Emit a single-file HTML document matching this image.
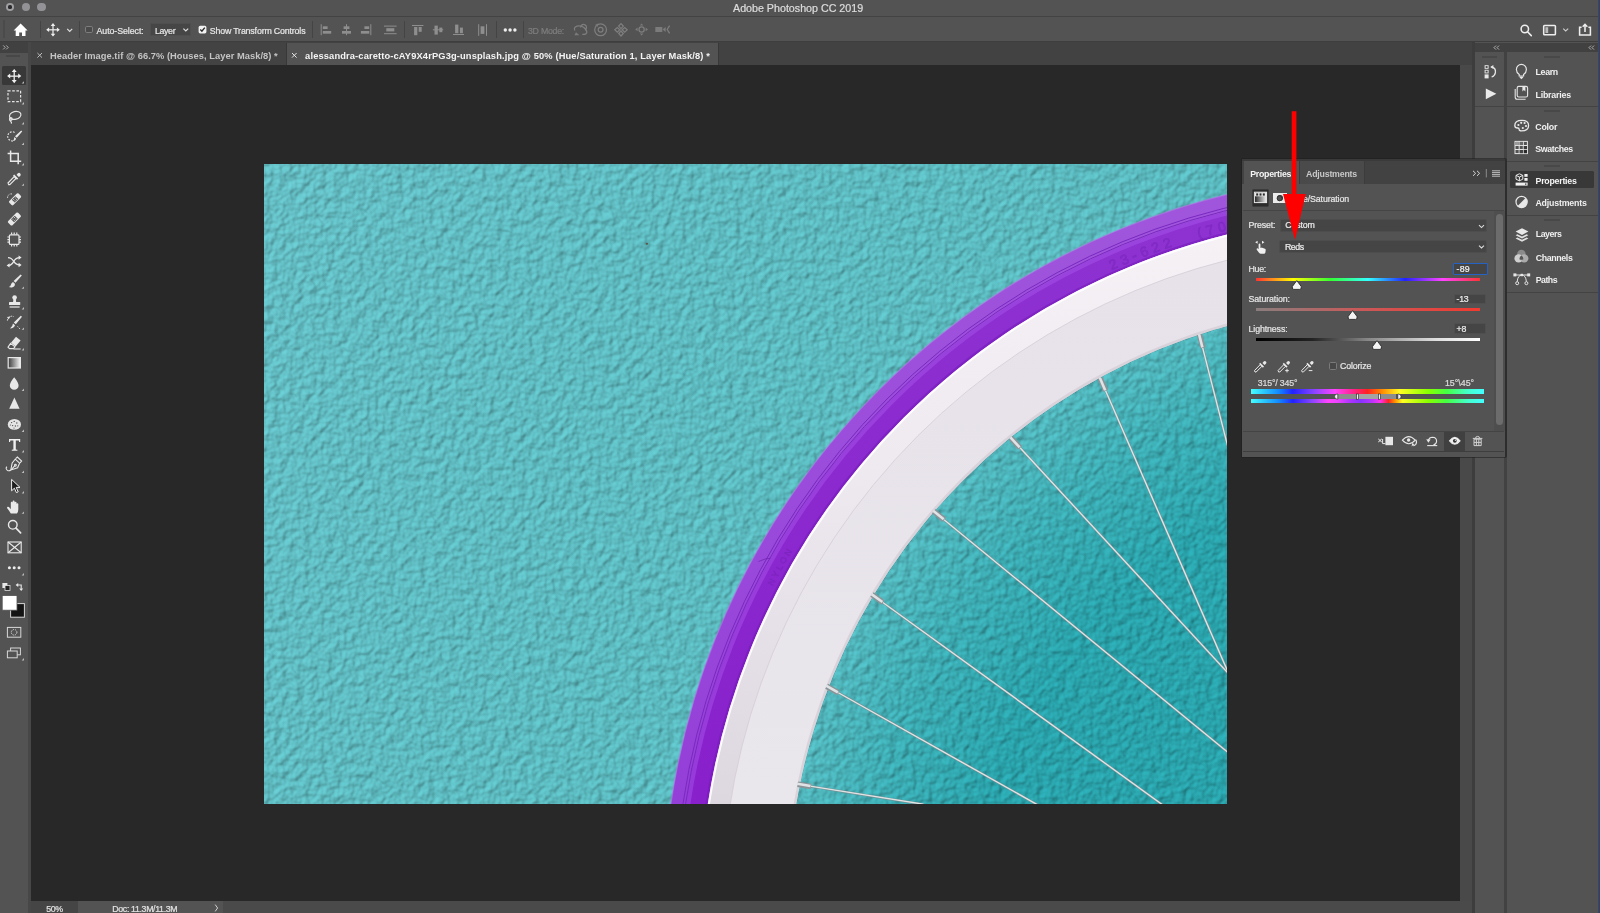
<!DOCTYPE html>
<html lang="en">
<head>
<meta charset="utf-8">
<title>Adobe Photoshop CC 2019</title>
<style>
*{margin:0;padding:0;box-sizing:border-box}
html,body{width:1600px;height:913px;overflow:hidden;background:#282828}
body{font-family:"Liberation Sans",sans-serif;font-size:9px;color:#e0e0e0;-webkit-font-smoothing:antialiased}
#root{position:relative;width:1600px;height:913px;overflow:hidden;will-change:transform}
.a{position:absolute}
.t{position:absolute;white-space:nowrap;line-height:1;-webkit-text-stroke:0.22px currentColor}
.b{font-weight:bold;-webkit-text-stroke:0}
svg{position:absolute;overflow:visible}
.sep{position:absolute;width:1px;background:#444;top:21px;height:17px}
.sep2{position:absolute;width:1px;background:#5e5e5e;top:21px;height:17px}
</style>
</head>
<body>
<div id="root">

<!-- ===== title bar ===== -->
<div class="a" style="left:0;top:0;width:1600px;height:16px;background:#535353"></div>
<div class="a" style="left:0;top:15.5px;width:1600px;height:1.5px;background:#434343"></div>
<div class="a" style="left:5.8px;top:2.8px;width:8.4px;height:8.4px;border-radius:50%;background:#a0a0a4"></div>
<div class="a" style="left:8.4px;top:5.4px;width:3.2px;height:3.2px;border-radius:50%;background:#2a2a2c"></div>
<div class="a" style="left:21.8px;top:2.8px;width:8.4px;height:8.4px;border-radius:50%;background:#939397"></div>
<div class="a" style="left:37.4px;top:2.8px;width:8.4px;height:8.4px;border-radius:50%;background:#939397"></div>
<div class="t" style="left:733px;top:2.9px;font-size:10.7px;color:#dcdcdc;letter-spacing:0">Adobe Photoshop CC 2019</div>

<!-- ===== options bar ===== -->
<div class="a" style="left:0;top:17px;width:1600px;height:24px;background:#535353"></div>
<div class="a" style="left:0;top:40.8px;width:1600px;height:1.4px;background:#3e3e3e"></div>
<div class="a" style="left:3px;top:20px;width:2px;height:18px;background:#4b4b4b"></div>
<!-- home -->

<div class="sep" style="left:40px"></div>
<div class="sep" style="left:79px"></div>
<div class="a" style="left:85.2px;top:25.8px;width:7.6px;height:7.6px;border:1px solid #7e7e7e;border-radius:1.8px;background:#4a4a4a"></div>
<div class="t" style="left:96.5px;top:26.5px;font-size:8.8px;letter-spacing:-0.06px;color:#e6e6e6">Auto-Select:</div>
<div class="a" style="left:150.2px;top:22.8px;width:41.2px;height:12.8px;background:#464646;border:1px solid #4f4f4f;border-radius:1.5px"></div>
<div class="t" style="left:155px;top:26.5px;font-size:8.8px;letter-spacing:-0.36px;color:#e6e6e6">Layer</div>
<div class="t" style="left:209.7px;top:26.5px;font-size:8.8px;letter-spacing:-0.154px;color:#e6e6e6">Show Transform Controls</div>
<div class="sep" style="left:311.5px"></div>
<div class="sep" style="left:403.6px"></div>
<div class="sep" style="left:496px"></div>
<div class="sep" style="left:523.2px"></div>
<div class="t" style="left:528px;top:26.5px;font-size:8.8px;letter-spacing:-0.27px;color:#7d7d7d">3D Mode:</div>
<svg class="a" style="left:0;top:0" width="1600" height="44" viewBox="0 0 1600 44">
 <path d="M20.6 23.6 L27.6 30.5 L25.5 30.5 L25.5 36 L22 36 L22 32.4 L19.2 32.4 L19.2 36 L15.7 36 L15.7 30.5 L13.6 30.5 Z" fill="#fff"/>
 <!-- move tool -->
 <g fill="#eee" stroke="none">
  <rect x="47.6" y="29.2" width="10.8" height="1.2"/><rect x="52.4" y="24.4" width="1.2" height="10.8"/>
  <path d="M53 23 L55.3 25.9 H50.7Z M53 36.6 L55.3 33.7 H50.7Z M46.2 29.8 L49.1 27.5 V32.1Z M59.8 29.8 L56.9 27.5 V32.1Z"/>
 </g>
 <polyline points="67.2,28.9 69.7,31.4 72.2,28.9" fill="none" stroke="#ddd" stroke-width="1.2"/>
 <!-- layer dropdown chevron -->
 <polyline points="183.4,28.6 185.8,31 188.2,28.6" fill="none" stroke="#ddd" stroke-width="1.2"/>
 <!-- check mark -->
 <rect x="198.6" y="25.8" width="7.8" height="7.6" rx="1.6" fill="#f2f2f2"/>
 <polyline points="200.3,29.6 201.9,31.3 204.8,27.6" fill="none" stroke="#2b2b2b" stroke-width="1.4"/>
 <!-- align icons (disabled) -->
 <g fill="#8e8e8e">
  <rect x="320.7" y="24.2" width="1" height="11"/><rect x="322.8" y="26.3" width="4.8" height="2.7"/><rect x="322.8" y="31" width="8.4" height="2.7"/>
  <rect x="346" y="24.2" width="1" height="11"/><rect x="343.6" y="26.3" width="5.8" height="2.7"/><rect x="342" y="31" width="9" height="2.7"/>
  <rect x="370.3" y="24.2" width="1" height="11"/><rect x="364.4" y="26.3" width="4.8" height="2.7"/><rect x="360.9" y="31" width="8.4" height="2.7"/>
  <rect x="384" y="25.6" width="12.6" height="1"/><rect x="384" y="33.2" width="12.6" height="1"/><rect x="386.3" y="28.2" width="8" height="3.2"/>
  <rect x="412" y="25" width="11.4" height="1"/><rect x="414.1" y="27" width="3.2" height="8.2"/><rect x="418.7" y="27" width="3" height="4.8"/>
  <rect x="432.8" y="29.3" width="10.4" height="1"/><rect x="434.5" y="25.6" width="3.3" height="9"/><rect x="439.3" y="27.6" width="3" height="4.6"/>
  <rect x="453" y="34" width="11" height="1"/><rect x="455.1" y="24.6" width="3.3" height="8.6"/><rect x="459.9" y="27.6" width="3" height="5.6"/>
  <rect x="478.2" y="24.2" width="1" height="11.6"/><rect x="486" y="24.2" width="1" height="11.6"/><rect x="480.6" y="26.3" width="3.8" height="7.6"/>
 </g>
 <circle cx="505.3" cy="30" r="1.7" fill="#eee"/><circle cx="510.1" cy="30" r="1.7" fill="#eee"/><circle cx="514.9" cy="30" r="1.7" fill="#eee"/>
 <!-- 3D mode icons (disabled) -->
 <g fill="none" stroke="#7e7e7e" stroke-width="1.25">
  <path d="M580.5 27.5 a3 3 0 1 1 4.5 2.6 M575 30.5 q-2 -3 2 -4.4 q3.5 -1 6.5 1.2 q3.5 2.5 3.3 5 q-0.5 2.4 -4.5 2"/>
  <path d="M576 32.2 l3.4 3 h-5z" fill="#7b7b7b" stroke="none"/>
  <circle cx="600.6" cy="29.8" r="5.9"/><circle cx="600.6" cy="29.8" r="2.4"/>
  <path d="M595 25 l3 -1.4 v3.2z" fill="#7b7b7b" stroke="none"/>
  <path d="M621 23.6 l2.3 2.5 l-2.3 2.5 l-2.3 -2.5z M621 31 l2.3 2.5 l-2.3 2.5 l-2.3 -2.5z M614.8 29.8 l2.5 -2.3 l2.5 2.3 l-2.5 2.3z M622.2 29.8 l2.5 -2.3 l2.5 2.3 l-2.5 2.3z"/>
  <circle cx="641.6" cy="29.4" r="2.6"/>
  <path d="M641.6 23.6 l1.8 2 h-3.6z M641.6 35.4 l1.8 -2 h-3.6z M635.2 29.4 l2.4 -1.8 v3.6z M648 29.4 l-2.4 -1.8 v3.6z" fill="#7b7b7b" stroke="none"/>
  <rect x="655.3" y="27" width="7" height="5" fill="#7b7b7b" stroke="none"/><path d="M662.6 29.5 l3 -2.4 v4.8z" fill="#7b7b7b" stroke="none"/>
  <path d="M669.6 25.6 l-2.4 3.9 l2.4 3.9"/>
 </g>
 <!-- right-side icons -->
 <g fill="none" stroke="#eee" stroke-width="1.55">
  <circle cx="1524.8" cy="29" r="3.7"/><path d="M1527.5 31.8 L1531.3 35.6" stroke-linecap="round"/>
  <rect x="1543.7" y="25.5" width="11.7" height="9.2" rx="0.8"/>
  <polyline points="1563.2,28.6 1565.7,31 1568.2,28.6" stroke="#ccc" stroke-width="1.1"/>
  <path d="M1581.6 27.2 H1579.6 V35 H1590.4 V27.2 H1588.4"/>
  <path d="M1585 32 V24.6 M1582.7 26.7 L1585 24.3 L1587.3 26.7"/>
 </g>
 <rect x="1545.4" y="27.2" width="2.8" height="5.8" fill="#bbb"/>
</svg>
<!-- ===== tab bar / canvas ===== -->
<div class="a" style="left:28px;top:42px;width:1446px;height:23.4px;background:#424242"></div>
<div class="a" style="left:30.6px;top:65.2px;width:1429px;height:836.4px;background:#282828"></div>
<!-- inactive tab -->
<div class="a" style="left:30.6px;top:43px;width:255.6px;height:21.8px;background:#434343"></div>
<div class="a" style="left:286.2px;top:43px;width:1px;height:21.8px;background:#383838"></div>
<!-- active tab -->
<div class="a" style="left:287px;top:43px;width:431px;height:22.4px;background:#535353"></div>
<div class="a" style="left:718px;top:43px;width:1px;height:21.8px;background:#383838"></div>
<svg class="a" style="left:0;top:0" width="1600" height="70" viewBox="0 0 1600 70">
 <path d="M37.4 53 l4.6 4.6 M42 53 l-4.6 4.6" stroke="#bdbdbd" stroke-width="1" fill="none"/>
 <path d="M292 53 l4.6 4.6 M296.6 53 l-4.6 4.6" stroke="#e4e4e4" stroke-width="1" fill="none"/>
</svg>
<div class="t b" style="left:50.1px;top:51.7px;font-size:9.3px;letter-spacing:0.054px;color:#c4c4c4">Header Image.tif @ 66.7% (Houses, Layer Mask/8) *</div>
<div class="t b" style="left:305.1px;top:51.7px;font-size:9.3px;letter-spacing:0.141px;color:#f4f4f4">alessandra-caretto-cAY9X4rPG3g-unsplash.jpg @ 50% (Hue/Saturation 1, Layer Mask/8) *</div>
<!-- vertical scrollbar strip & bottom strip -->
<div class="a" style="left:1459.5px;top:65.2px;width:13px;height:848px;background:#494949"></div>
<div class="a" style="left:30.6px;top:901.4px;width:1442px;height:12px;background:#4a4a4a"></div>
<!-- ===== photo ===== -->
<svg class="a" style="left:264px;top:164px" width="963" height="640" viewBox="264 164 963 640">
 <defs>
  <clipPath id="pc"><rect x="264" y="164" width="963" height="640"/></clipPath>
  <clipPath id="wtc"><circle cx="1387.9" cy="904.0" r="599.8" /></clipPath>
  <linearGradient id="wall" gradientUnits="userSpaceOnUse" x1="264" y1="164" x2="1227" y2="804">
   <stop offset="0" stop-color="#64bec4"/><stop offset="0.5" stop-color="#5cbbc0"/><stop offset="1" stop-color="#57b8bd"/>
  </linearGradient>
  <radialGradient id="inwall" gradientUnits="userSpaceOnUse" cx="1387.9" cy="904.0" r="599.8">
   <stop offset="0" stop-color="#29a2aa"/><stop offset="0.68" stop-color="#2aa3ab"/><stop offset="0.85" stop-color="#3cacb3"/><stop offset="1" stop-color="#52b7bd"/>
  </radialGradient>
  <linearGradient id="tyA" gradientUnits="userSpaceOnUse" x1="0" y1="190" x2="0" y2="804">
   <stop offset="0" stop-color="#a056dc"/><stop offset="0.5" stop-color="#9a4bdb"/><stop offset="1" stop-color="#943fd8"/>
  </linearGradient>
  <linearGradient id="tyB" gradientUnits="userSpaceOnUse" x1="0" y1="200" x2="0" y2="804">
   <stop offset="0" stop-color="#8e33d2"/><stop offset="0.5" stop-color="#8b29cf"/><stop offset="1" stop-color="#8820cb"/>
  </linearGradient>
  <linearGradient id="band" gradientUnits="userSpaceOnUse" x1="0" y1="230" x2="0" y2="804">
   <stop offset="0" stop-color="#f5f1f5"/><stop offset="0.4" stop-color="#eeeaf0"/><stop offset="1" stop-color="#ddd7df"/>
  </linearGradient>
  <linearGradient id="rimw" gradientUnits="userSpaceOnUse" x1="0" y1="260" x2="0" y2="804">
   <stop offset="0" stop-color="#e7e2e9"/><stop offset="1" stop-color="#e9e6ec"/>
  </linearGradient>
  <filter id="stucco" x="0" y="0" width="100%" height="100%" color-interpolation-filters="sRGB">
   <feTurbulence type="fractalNoise" baseFrequency="0.13" numOctaves="2" seed="7" result="n0"/>
   <feGaussianBlur in="n0" stdDeviation="0.7" result="n"/>
   <feDiffuseLighting in="n" surfaceScale="1.3" diffuseConstant="1" lighting-color="#ffffff" result="l">
    <feDistantLight azimuth="225" elevation="64"/>
   </feDiffuseLighting>
   <feComposite in="SourceGraphic" in2="l" operator="arithmetic" k1="1.112" k2="0" k3="0" k4="0"/>
  </filter>
 </defs>
 <g clip-path="url(#pc)">
  <g filter="url(#stucco)"><rect x="264" y="164" width="963" height="640" fill="url(#wall)"/></g>
  <ellipse cx="646.9" cy="243.8" rx="1.3" ry="1" fill="#5a4a30" opacity="0.85"/>
  <!-- tyre -->
  <circle cx="1400.5" cy="911.3" r="737.4" fill="url(#tyA)"/>
  <circle cx="1400.5" cy="911.3" r="737.4" fill="none" stroke="#b47ae6" stroke-width="1.4" opacity="0.55"/>
  <circle cx="1398.74" cy="910.88" r="720.26" fill="url(#tyB)"/>
  <circle cx="1398.5" cy="910.82" r="718.02" fill="none" stroke="#a654ea" stroke-width="4" opacity="0.5"/>
  <circle cx="1399.13" cy="910.97" r="724.14" fill="none" stroke="#7a28c0" stroke-width="1"/>
  <circle cx="1398.84" cy="910.9" r="721.28" fill="none" stroke="#7a28c0" stroke-width="1"/>
  <circle cx="1396.3" cy="910.3" r="697.8000000000001" fill="none" stroke="#741ab8" stroke-width="2.4" opacity="0.55"/>
  <!-- embossed tyre text -->
  <path id="tp" d="M704.1 804 A700.7 700.7 0 0 1 1240 227.45" fill="none"/>
  <g font-family="Liberation Sans, sans-serif" fill="#6c1fb0" fill-opacity="0.16" stroke="#7424b6" stroke-opacity="0.5" stroke-width="0.7">
   <text font-size="14" letter-spacing="4.3"><textPath href="#tp" startOffset="700">23-622</textPath></text>
   <text font-size="14" letter-spacing="4.3"><textPath href="#tp" startOffset="793">(700</textPath></text>
   <text font-size="8.5" letter-spacing="2.6" stroke-width="0.5" dy="-2.5"><textPath href="#tp" startOffset="229">NYLON</textPath></text>
  </g>
  <path d="M758.5 561.5 l7 -2.6 l5 -0.6" stroke="#6a1fa8" stroke-width="0.9" fill="none" opacity="0.7"/>
  <!-- rim -->
  <circle cx="1396.3" cy="910.3" r="696.6" fill="url(#band)"/>
  <circle cx="1396.3" cy="910.3" r="695.5" fill="none" stroke="#ffffff" stroke-width="2.2" opacity="0.9"/>
  <circle cx="1391.0" cy="908.9" r="669.1" fill="url(#rimw)"/>
  <circle cx="1391.0" cy="908.9" r="669.1" fill="none" stroke="#d3c9d4" stroke-width="0.9" opacity="0.8"/>
  <!-- inner wall -->
  <circle cx="1387.9" cy="904.0" r="601.0" fill="none" stroke="#d3cad3" stroke-width="3" opacity="0.7"/>
  <g filter="url(#stucco)"><rect x="780" y="300" width="447" height="504" fill="url(#inwall)" clip-path="url(#wtc)"/></g>
  <!-- spokes -->
  <g clip-path="url(#wtc)">
   <g stroke="#7b8c8f" stroke-width="2.5" fill="none" opacity="0.8"><line x1="1199.1" y1="332.9" x2="1228.9" y2="450.1"/><line x1="1099.5" y1="376.4" x2="1229.6" y2="675.3"/><line x1="1009.6" y1="436.4" x2="1231.8" y2="677.3"/><line x1="932.2" y1="510.0" x2="1232.6" y2="756.3"/><line x1="870.4" y1="593.4" x2="1166.7" y2="807.9"/><line x1="824.9" y1="685.2" x2="1041.6" y2="807.1"/><line x1="795.7" y1="784.0" x2="923.7" y2="804.5"/></g>
   <g stroke="#e2e3e4" stroke-width="1.4" fill="none"><line x1="1198.8" y1="332.6" x2="1228.6" y2="449.8"/><line x1="1099.3" y1="376.2" x2="1229.3" y2="675.1"/><line x1="1009.3" y1="436.1" x2="1231.6" y2="677.0"/><line x1="931.9" y1="509.7" x2="1232.3" y2="756.0"/><line x1="870.1" y1="593.2" x2="1166.4" y2="807.6"/><line x1="824.6" y1="685.0" x2="1041.3" y2="806.9"/><line x1="795.5" y1="783.8" x2="923.4" y2="804.2"/></g>
  </g>
  <g stroke="#8a9498" stroke-width="5.6" fill="none"><line x1="1199.6" y1="334.8" x2="1202.9" y2="347.9"/><line x1="1100.3" y1="378.3" x2="1105.7" y2="390.7"/><line x1="1010.9" y1="437.9" x2="1020.1" y2="447.8"/><line x1="933.7" y1="511.3" x2="944.2" y2="519.8"/><line x1="872.0" y1="594.6" x2="882.9" y2="602.5"/><line x1="826.6" y1="686.2" x2="838.4" y2="692.8"/><line x1="797.7" y1="784.3" x2="811.0" y2="786.5"/></g>
  <g stroke="#dfe3e6" stroke-width="2.6" fill="none"><line x1="1199.1" y1="334.3" x2="1202.4" y2="347.4"/><line x1="1099.8" y1="377.8" x2="1105.2" y2="390.2"/><line x1="1010.4" y1="437.4" x2="1019.6" y2="447.3"/><line x1="933.2" y1="510.8" x2="943.7" y2="519.3"/><line x1="871.5" y1="594.1" x2="882.4" y2="602.0"/><line x1="826.1" y1="685.7" x2="837.9" y2="692.3"/><line x1="797.2" y1="783.8" x2="810.5" y2="786.0"/></g>
 </g>
</svg>
<!-- ===== left toolbar ===== -->
<div class="a" style="left:0;top:42px;width:28px;height:871px;background:#535353"></div>
<div class="a" style="left:28px;top:42px;width:2.6px;height:871px;background:#474747"></div>
<div class="a" style="left:0;top:42px;width:28px;height:10.6px;background:#414141"></div>
<div class="a" style="left:6px;top:55px;width:14.4px;height:1.6px;background:#474747"></div>
<div class="a" style="left:2px;top:66.2px;width:24.2px;height:18.8px;background:#383838;border-radius:1.5px"></div>
<svg class="a" style="left:0;top:0" width="30" height="700" viewBox="0 0 30 700">
 <g fill="none" stroke="#b8b8b8" stroke-width="0.9"><polyline points="3.2,45.4 5.2,47.4 3.2,49.4"/><polyline points="6.2,45.4 8.2,47.4 6.2,49.4"/></g>
 <!-- corner flyout marks -->
 <g fill="#bcbcbc">
  <path d="M24 81.2v2.4h-2.4z M24 102v2.4h-2.4z M24 122v2.4h-2.4z M24 142.6v2.4h-2.4z M24 163v2.4h-2.4z M24 183.4v2.4h-2.4z M24 286.4v2.4h-2.4z M24 307v2.4h-2.4z M24 327.4v2.4h-2.4z M24 348v2.4h-2.4z M24 388.6v2.4h-2.4z M24 429.6v2.4h-2.4z M24 450v2.4h-2.4z M24 470.6v2.4h-2.4z M24 491v2.4h-2.4z M24 511.4v2.4h-2.4z M24 573v2.4h-2.4z M24 658v2.4h-2.4z"/>
 </g>
 <!-- 1 move -->
 <g fill="#f0f0f0"><rect x="8.8" y="75.5" width="10.8" height="1.3"/><rect x="13.55" y="70.7" width="1.3" height="10.8"/>
  <path d="M14.2 69 L16.7 72.1 H11.7Z M14.2 83.2 L16.7 80.1 H11.7Z M7.1 76.1 L10.2 73.6 V78.6Z M21.3 76.1 L18.2 73.6 V78.6Z"/></g>
 <!-- 2 marquee -->
 <rect x="8" y="90.8" width="12.6" height="10.8" fill="none" stroke="#e4e4e4" stroke-width="1.2" stroke-dasharray="2.6 1.6"/>
 <!-- 3 lasso -->
 <g fill="none" stroke="#e4e4e4" stroke-width="1.2"><ellipse cx="15.2" cy="115.4" rx="5.8" ry="3.9" transform="rotate(-14 15.2 115.4)"/><path d="M10.6 118.2 q-1.6 1.6 0 3 q1.4 1 0.6 2.4"/><circle cx="10.8" cy="119" r="1.3"/></g>
 <!-- 4 quick selection -->
 <g fill="none" stroke="#e4e4e4" stroke-width="1.1"><path d="M14.6 132.4 a4.6 4.6 0 1 0 -1 8.4" stroke-dasharray="1.8 1.3"/></g>
 <path d="M21.2 130.6 l1 1 l-5.4 6.2 l-1.8 -1.6z M14.4 137 l1.8 1.7 q-0.6 2.4 -3.8 2.6 q1.8 -1.4 2 -4.3z" fill="#e8e8e8"/>
 <!-- 5 crop -->
 <g fill="none" stroke="#e8e8e8" stroke-width="1.5"><path d="M10.6 150.6 V161.2 H21.2"/><path d="M7.6 153.6 H18.2 V164.2"/></g>
 <!-- 6 eyedropper -->
 <g><path d="M8.6 184.6 l-0.6 -1.6 l6.2 -6.4 l1.8 1.8 l-6.2 6.2z" fill="none" stroke="#e8e8e8" stroke-width="1.1"/><path d="M14.2 174.6 l4 4 l-1.2 1.2 l-4 -4z" fill="#e8e8e8"/><path d="M16.6 174.8 q2 -3 3.6 -1.4 q1.6 1.6 -1.4 3.6z" fill="#e8e8e8"/></g>
 <!-- 7 spot healing -->
 <g transform="rotate(-45 15 199.4)"><rect x="8.6" y="196.6" width="13" height="5.6" rx="1.2" fill="#e8e8e8"/><rect x="12.6" y="197.4" width="5" height="4" fill="#535353"/><circle cx="14" cy="198.6" r="0.5" fill="#eee"/><circle cx="16.2" cy="198.6" r="0.5" fill="#eee"/><circle cx="14" cy="200.4" r="0.5" fill="#eee"/><circle cx="16.2" cy="200.4" r="0.5" fill="#eee"/></g>
 <path d="M7.6 198 a3.6 3.6 0 0 1 5.4 -3.6" fill="none" stroke="#e0e0e0" stroke-width="1" stroke-dasharray="1.5 1.2"/>
 <!-- 8 healing brush -->
 <g transform="rotate(-45 14.4 219)"><rect x="7.4" y="216" width="14" height="6" rx="1.3" fill="#e8e8e8"/><rect x="11.8" y="216.9" width="5.2" height="4.2" fill="#535353"/><circle cx="13.3" cy="218.1" r="0.5" fill="#eee"/><circle cx="15.5" cy="218.1" r="0.5" fill="#eee"/><circle cx="13.3" cy="220" r="0.5" fill="#eee"/><circle cx="15.5" cy="220" r="0.5" fill="#eee"/></g>
 <!-- 9 patch / content-aware -->
 <g fill="none" stroke="#e8e8e8" stroke-width="1.2"><rect x="9.4" y="234.8" width="9.6" height="9.6" rx="1"/><path d="M11.6 232.6v2 M14.2 232.6v2 M16.8 232.6v2 M11.6 244.6v2 M14.2 244.6v2 M16.8 244.6v2 M7.2 237v0.01 M7.4 237h2 M7.4 239.6h2 M7.4 242.2h2 M19 237h2 M19 239.6h2 M19 242.2h2"/></g>
 <!-- 10 content-aware move -->
 <g fill="none" stroke="#e8e8e8" stroke-width="1.3"><path d="M8 257.6 q3.4 0 5.6 3.6 q2.2 3.8 6 3.8"/><path d="M8.4 265.4 q3.2 0 5.2 -3.8 q2.2 -4 6 -4"/></g>
 <path d="M21.6 257.6 l-3 -2.2 v4.4z M21.6 265 l-3 -2.2 v4.4z M6.6 265.4 l3 -2.2 v4.4z" fill="#e8e8e8"/>
 <!-- 11 brush -->
 <path d="M20.6 274.4 l1.2 1.1 l-6.300 7.300 l-1.900 -1.700z" fill="#e8e8e8"/>
 <path d="M13 282 l1.900 1.800 q0.300 2.600 -2.400 3.400 q-1.800 0.500 -3.700 -0.300 q1.700 -0.500 2 -2 q0.400 -2 2.200 -2.900z" fill="#e8e8e8"/>
 <!-- 12 stamp -->
 <g fill="#e8e8e8"><circle cx="14.6" cy="297.6" r="2.3"/><path d="M13.4 299 h2.400 l0.400 3.400 h-3.200z"/><rect x="9" y="302" width="11.2" height="3" rx="0.6"/><rect x="9.6" y="306.4" width="10" height="1.2"/></g>
 <!-- 13 history brush -->
 <path d="M20.8 315.800 l1.2 1 l-6.200 7.400 l-2 -1.800z M13 323.400 l2 1.900 q-0.800 3 -5 3.200 q2.600 -1.800 3 -5.100z" fill="#e8e8e8"/>
 <g fill="none" stroke="#e0e0e0" stroke-width="1"><path d="M7.400 320.600 a4.400 4.400 0 0 1 6.600 -3.800" stroke-dasharray="1.600 1.200"/><path d="M17.600 326.400 l2.400 2.600" stroke-dasharray="1.200 1.100"/></g>
 <path d="M7 317 l3.400 -0.600 l-1.800 3z" fill="#e0e0e0"/>
 <!-- 14 eraser -->
 <g><path d="M16 336.800 l4.600 3.600 l-5 6 l-4.600 -3.600z" fill="#e8e8e8"/><path d="M10.600 343.400 l4.400 3.400 l-1.400 1.800 h-4 l-1.600 -1.400z" fill="none" stroke="#e8e8e8" stroke-width="1.100"/><path d="M13.600 349 h7" stroke="#e8e8e8" stroke-width="1.100"/></g>
 <!-- 15 gradient -->
 <defs><linearGradient id="tg" x1="0" y1="0" x2="1" y2="0"><stop offset="0" stop-color="#3a3a3a"/><stop offset="1" stop-color="#f4f4f4"/></linearGradient></defs>
 <rect x="8.200" y="357.600" width="12.200" height="10.400" fill="url(#tg)" stroke="#e8e8e8" stroke-width="1.200"/>
 <!-- 16 blur -->
 <path d="M14.200 377.200 q4.400 5.400 4.400 8.200 a4.400 4.400 0 0 1 -8.800 0 q0 -2.800 4.400 -8.200z" fill="#e8e8e8"/>
 <!-- 17 sharpen -->
 <path d="M14.400 397.600 l5.200 11.200 h-10.400z" fill="#e8e8e8"/>
 <!-- 18 sponge -->
 <ellipse cx="14.400" cy="424.400" rx="6.600" ry="5.400" fill="#e4e4e4"/>
 <g fill="#535353"><circle cx="11.600" cy="422.600" r="0.700"/><circle cx="14.200" cy="421.400" r="0.700"/><circle cx="16.800" cy="423" r="0.700"/><circle cx="12.600" cy="425.600" r="0.700"/><circle cx="15.400" cy="426" r="0.700"/><circle cx="17.800" cy="425.800" r="0.600"/><circle cx="10.400" cy="425" r="0.600"/><circle cx="14" cy="428" r="0.600"/></g>
 <!-- 19 type -->
 <path d="M9 439 h11.200 v3 h-1 l-0.400 -1.600 h-3 v9 l1.600 0.400 v1 h-5.600 v-1 l1.600 -0.400 v-9 h-3 l-0.400 1.600 h-1z" fill="#f0f0f0"/>
 <!-- 20 pen -->
 <g fill="none" stroke="#e8e8e8" stroke-width="1.100"><path d="M15.200 459.200 l4.400 4 l-2 4.600 l-6.800 2.200 l1.400 -7z"/><path d="M15.600 458.600 l1.800 -1.600 l4.200 4 l-1.600 1.800"/><path d="M11 469.800 l4 -4.200"/><circle cx="15.400" cy="465.200" r="0.900"/><path d="M6.800 466.600 q-1.600 2.400 0.800 3.800 q1.800 0.800 3 -0.400"/></g>
 <!-- 21 path selection -->
 <path d="M11.600 479.400 v11.400 l2.800 -2.600 l2 4.400 l1.800 -0.800 l-2 -4.400 h3.800z" fill="#1e1e1e" stroke="#f0f0f0" stroke-width="1"/>
 <!-- 22 hand -->
 <path d="M10.800 513.400 q-2 -3 -3.400 -4.800 q-0.800 -1.400 0.400 -1.800 q1 -0.200 2.200 1.400 l0.800 1 v-6.400 q0 -1 0.900 -1 q0.900 0 0.900 1 v-1.200 q0 -1 1 -1 q1 0 1 1 v1 q0 -0.900 0.950 -0.900 q0.950 0 0.950 0.900 v1.400 q0 -0.800 0.900 -0.800 q0.900 0 0.900 0.900 v5.500 q0 2.400 -1.400 3.800z" fill="#eaeaea"/>
 <!-- 23 zoom -->
 <g fill="none" stroke="#e8e8e8" stroke-width="1.400"><circle cx="12.800" cy="524.800" r="4.300"/><path d="M16 528.200 l4.600 4.600" stroke-linecap="round" stroke-width="1.700"/></g>
 <!-- 24 frame -->
 <g fill="none" stroke="#e8e8e8" stroke-width="1.100"><rect x="8" y="542" width="13.200" height="10.800"/><path d="M8 542 l13.200 10.800 M21.200 542 l-13.200 10.800"/></g>
 <!-- 25 dots -->
 <circle cx="9.400" cy="567.800" r="1.500" fill="#eee"/><circle cx="14.200" cy="567.800" r="1.500" fill="#eee"/><circle cx="19" cy="567.800" r="1.500" fill="#eee"/>
 <!-- default colours / swap -->
 <rect x="2.400" y="583" width="5" height="5" fill="#e8e8e8"/><rect x="5" y="585.600" width="5" height="5" fill="#222" stroke="#e0e0e0" stroke-width="0.800"/>
 <g fill="none" stroke="#e8e8e8" stroke-width="1.100"><path d="M17.600 585 h3.600 v3.800"/></g>
 <path d="M15.600 585 l2.600 -2 v4z M21.200 591 l-2 -2.600 h4z" fill="#e8e8e8"/>
 <!-- fg/bg -->
 <rect x="10.600" y="603.600" width="13.800" height="13.600" fill="#141414" stroke="#d6d6d6" stroke-width="1"/>
 <rect x="2.200" y="595.600" width="14.800" height="14.600" fill="#ffffff" stroke="#535353" stroke-width="0.800"/>
 <!-- quick mask -->
 <g fill="none" stroke="#d8d8d8" stroke-width="1"><rect x="7.400" y="627.400" width="13.400" height="9.800"/><circle cx="14.100" cy="632.300" r="2.800" stroke-dasharray="1.300 1"/></g>
 <!-- screen mode -->
 <g fill="#535353" stroke="#d8d8d8" stroke-width="1"><rect x="10.600" y="648" width="9.800" height="6.800"/><rect x="7.400" y="651" width="9.800" height="6.800"/></g>
</svg>
<!-- ===== right icon panels ===== -->
<div class="a" style="left:1472.4px;top:42px;width:127.6px;height:871px;background:#535353"></div>
<div class="a" style="left:1472.4px;top:42px;width:2.4px;height:871px;background:#3d3d3d"></div>
<div class="a" style="left:1474.8px;top:42.6px;width:123.6px;height:9.8px;background:#414141"></div>
<div class="a" style="left:1503.8px;top:52.4px;width:3px;height:861px;background:#424242"></div>
<div class="a" style="left:1597.8px;top:0;width:1.4px;height:913px;background:#454545"></div>
<div class="a" style="left:1599px;top:0;width:1px;height:913px;background:#23427f"></div>
<!-- grips -->
<div class="a" style="left:1481.6px;top:55.8px;width:15.6px;height:1.8px;background:#484848"></div>
<div class="a" style="left:1544.2px;top:55.8px;width:15.6px;height:1.8px;background:#484848"></div>
<div class="a" style="left:1544.2px;top:110.4px;width:15.6px;height:1.8px;background:#484848"></div>
<div class="a" style="left:1544.2px;top:164.8px;width:15.6px;height:1.8px;background:#484848"></div>
<div class="a" style="left:1544.2px;top:219px;width:15.6px;height:1.8px;background:#484848"></div>
<!-- group separators -->
<div class="a" style="left:1474.8px;top:105.6px;width:123px;height:1.2px;background:#434343"></div>
<div class="a" style="left:1506.8px;top:160.6px;width:91px;height:1.2px;background:#434343"></div>
<div class="a" style="left:1506.8px;top:214.8px;width:91px;height:1.2px;background:#434343"></div>
<div class="a" style="left:1506.8px;top:291.6px;width:91px;height:1.2px;background:#434343"></div>
<!-- active row -->
<div class="a" style="left:1510.2px;top:171.4px;width:84px;height:16.6px;background:#383838;border-radius:1.5px"></div>
<div class="t b" style="left:1535.5px;top:68.3px;font-size:8.8px;letter-spacing:-0.31px;color:#f0f0f0">Learn</div>
<div class="t b" style="left:1535.5px;top:90.8px;font-size:8.8px;letter-spacing:-0.19px;color:#f0f0f0">Libraries</div>
<div class="t b" style="left:1535.3px;top:123.0px;font-size:8.8px;letter-spacing:-0.23px;color:#f0f0f0">Color</div>
<div class="t b" style="left:1535.3px;top:144.7px;font-size:8.8px;letter-spacing:-0.39px;color:#f0f0f0">Swatches</div>
<div class="t b" style="left:1535.5px;top:177.1px;font-size:8.8px;letter-spacing:-0.24px;color:#f6f6f6">Properties</div>
<div class="t b" style="left:1535.4px;top:199.3px;font-size:8.8px;letter-spacing:-0.18px;color:#f0f0f0">Adjustments</div>
<div class="t b" style="left:1535.7px;top:230.2px;font-size:8.8px;letter-spacing:-0.43px;color:#f0f0f0">Layers</div>
<div class="t b" style="left:1535.7px;top:253.9px;font-size:8.8px;letter-spacing:-0.35px;color:#f0f0f0">Channels</div>
<div class="t b" style="left:1535.7px;top:275.5px;font-size:8.8px;letter-spacing:-0.51px;color:#f0f0f0">Paths</div>
<svg class="a" style="left:0;top:0" width="1600" height="300" viewBox="0 0 1600 300">
 <g fill="none" stroke="#bdbdbd" stroke-width="0.9">
  <polyline points="1496,45.600 1494,47.600 1496,49.600"/><polyline points="1499,45.600 1497,47.600 1499,49.600"/>
  <polyline points="1591,45.600 1589,47.600 1591,49.600"/><polyline points="1594,45.600 1592,47.600 1594,49.600"/>
 </g>
 <!-- history -->
 <g fill="#e6e6e6"><rect x="1484.600" y="65.200" width="4" height="3.600"/><rect x="1484.600" y="69.800" width="4" height="3.600"/><rect x="1484.600" y="74.400" width="4" height="4"/></g>
 <rect x="1485.600" y="66.100" width="2" height="1.800" fill="#444"/><rect x="1485.600" y="70.700" width="2" height="1.800" fill="#444"/>
 <path d="M1491.400 67 q4.600 0.600 4 5.600 q-0.600 3.400 -3.800 4.400" fill="none" stroke="#e6e6e6" stroke-width="1.300"/>
 <path d="M1490.200 67 l3.200 -2 v4z" fill="#e6e6e6"/>
 <!-- play -->
 <path d="M1485.800 88.400 l10.600 5.400 l-10.600 5.400z" fill="#eaeaea"/>
 <!-- learn bulb -->
 <g fill="none" stroke="#e6e6e6" stroke-width="1.200"><path d="M1519.200 74.400 q-2.800 -2 -2.800 -5 a5 5 0 0 1 10 0 q0 3 -2.800 5 v1.600 h-4.400z"/></g>
 <path d="M1519.600 76.400 h3.600 v1.200 l-1.800 1.600 l-1.800 -1.600z" fill="#e6e6e6"/>
 <!-- libraries -->
 <g fill="none" stroke="#e6e6e6" stroke-width="1.100"><rect x="1517.200" y="86.400" width="10.400" height="10.600" rx="1.600"/><path d="M1515.200 89 v8.200 q0 2 2 2 h8.400"/></g>
 <path d="M1522.400 86.400 h3 v5 l-1.500 -1.300 l-1.500 1.300z" fill="#e6e6e6"/>
 <!-- color palette -->
 <path d="M1521.800 120.400 q6.800 0 6.800 5 q0 5.400 -7.200 5.400 q-2.200 0 -2.200 -1.400 q0 -1.400 -1.400 -1.400 q-3 0 -3 -2.600 q0 -5 7 -5z" fill="none" stroke="#e8e8e8" stroke-width="1.300"/>
 <g fill="#e8e8e8"><circle cx="1518.400" cy="125" r="1.100"/><circle cx="1521.200" cy="122.800" r="1.100"/><circle cx="1524.600" cy="123" r="1.100"/><circle cx="1526" cy="126" r="1.100"/><circle cx="1522.800" cy="128" r="1.100"/></g>
 <!-- swatches -->
 <g fill="none" stroke="#e6e6e6" stroke-width="1"><rect x="1515" y="141.400" width="12.400" height="12.200"/><path d="M1519.200 141.400 v12.200 M1523.300 141.400 v12.200 M1515 145.500 h12.400 M1515 149.500 h12.400"/></g>
 <rect x="1515.500" y="141.900" width="3.300" height="3.200" fill="#9a9a9a"/><rect x="1519.700" y="141.900" width="3.200" height="3.200" fill="#6a6a6a"/><rect x="1523.800" y="146" width="3.200" height="3.200" fill="#3a3a3a"/><rect x="1523.800" y="150" width="3.200" height="3.200" fill="#2a2a2a"/><rect x="1519.700" y="150" width="3.200" height="3.200" fill="#444"/>
 <!-- properties icon -->
 <g fill="none" stroke="#e8e8e8" stroke-width="1"><path d="M1519.400 173.800 l3.400 1.600 v3.800 l-3.400 1.600 l-3.400 -1.600 v-3.800z M1516 175.400 l3.400 1.600 l3.400 -1.600 M1519.400 177 v3.800"/></g>
 <rect x="1524.400" y="174" width="3.200" height="2.800" fill="#f0f0f0"/><rect x="1524.400" y="178" width="3.200" height="2.800" fill="#f0f0f0"/>
 <rect x="1515.600" y="182.600" width="12" height="3" fill="#f0f0f0"/><rect x="1525" y="183.500" width="1.400" height="1.200" fill="#333"/>
 <!-- adjustments -->
 <circle cx="1521.600" cy="202" r="5.600" fill="none" stroke="#e8e8e8" stroke-width="1.200"/>
 <path d="M1525.560 198.040 a5.600 5.600 0 0 1 -7.920 7.920z" fill="#e8e8e8"/>
 <!-- layers -->
 <path d="M1522 228.200 l6.400 3.400 l-6.400 3.400 l-6.400 -3.400z" fill="#e8e8e8"/>
 <path d="M1515.600 235.200 l1.800 -1 l4.600 2.400 l4.600 -2.400 l1.800 1 l-6.400 3.400z M1515.600 238.400 l1.800 -1 l4.600 2.400 l4.600 -2.400 l1.800 1 l-6.400 3.400z" fill="#e8e8e8" opacity="0.95"/>
 <!-- channels -->
 <circle cx="1521.400" cy="254" r="4.200" fill="#8a8a8a"/><circle cx="1518.600" cy="258.400" r="4.200" fill="#cfcfcf"/><circle cx="1524.200" cy="258.400" r="4.200" fill="#b4b4b4" opacity="0.9"/>
 <path d="M1521.400 255.400 q2 1.200 2 3.800 q-2 1.200 -4 0 q0 -2.600 2 -3.800z" fill="#555"/>
 <!-- paths -->
 <g fill="none" stroke="#e6e6e6" stroke-width="1"><path d="M1515 275 h13.600 M1517.200 281.600 q0.600 -6.400 4.600 -6.600 q4 0.200 4.600 6.600"/><circle cx="1517.200" cy="283.200" r="1.500"/><circle cx="1526.400" cy="283.200" r="1.500"/></g>
 <rect x="1513.400" y="273.400" width="3" height="3" fill="#e6e6e6"/><rect x="1527.200" y="273.400" width="3" height="3" fill="#e6e6e6"/><rect x="1520.600" y="273.800" width="2.400" height="2.400" fill="#e6e6e6"/>
</svg>
<!-- ===== floating Properties panel ===== -->
<div class="a" style="left:1240.6px;top:158px;width:266px;height:300.4px;background:#1d1d1d;opacity:.55;border-radius:2px"></div>
<div class="a" style="left:1242.2px;top:159.2px;width:263px;height:297.6px;background:#535353"></div>
<!-- tab strip -->
<div class="a" style="left:1242.2px;top:159.2px;width:263px;height:25px;background:#424242"></div>
<div class="a" style="left:1242.2px;top:159.2px;width:263px;height:1.6px;background:#3a3a3a"></div>
<div class="a" style="left:1244px;top:161.200px;width:55px;height:23.200px;background:#535353"></div>
<div class="a" style="left:1299.600px;top:161.200px;width:64.600px;height:22.400px;background:#4a4a4a"></div>
<div class="a" style="left:1299px;top:161.200px;width:1px;height:23px;background:#3c3c3c"></div>
<div class="a" style="left:1364.200px;top:161.200px;width:1px;height:22.400px;background:#3c3c3c"></div>
<div class="t b" style="left:1250.200px;top:170.1px;font-size:8.800px;letter-spacing:-0.250px;color:#f6f6f6">Properties</div>
<div class="t b" style="left:1306px;top:170.1px;font-size:8.800px;letter-spacing:-0.210px;color:#c8c8c8">Adjustments</div>
<!-- header row -->
<div class="a" style="left:1243px;top:210px;width:261.400px;height:1.200px;background:#454545"></div>
<div class="a" style="left:1251.800px;top:189.400px;width:17.200px;height:17.200px;background:#2c2c2c;border:1px solid #3c3c3c;border-radius:1.500px"></div>
<div class="a" style="left:1272.800px;top:193.200px;width:14px;height:10.200px;background:#ececec"></div>
<div class="a" style="left:1277.400px;top:195.400px;width:6px;height:6px;border-radius:50%;background:#2e2e2e"></div>
<div class="t" style="left:1292px;top:195.0px;font-size:8.800px;letter-spacing:-0.120px;color:#e6e6e6">Hue/Saturation</div>
<!-- preset rows -->
<div class="t" style="left:1248.500px;top:221.1px;font-size:8.800px;letter-spacing:-0.170px;color:#e6e6e6">Preset:</div>
<div class="a" style="left:1279.800px;top:219px;width:207.200px;height:12.800px;background:#454545;border:1px solid #4d4d4d;border-radius:2px"></div>
<div class="t" style="left:1285.300px;top:221.1px;font-size:8.800px;letter-spacing:-0.135px;color:#ececec">Custom</div>
<div class="a" style="left:1279.400px;top:240px;width:207.600px;height:12.800px;background:#454545;border:1px solid #4d4d4d;border-radius:2px"></div>
<div class="t" style="left:1284.900px;top:243.2px;font-size:8.800px;letter-spacing:-0.430px;color:#ececec">Reds</div>
<!-- sliders -->
<div class="t" style="left:1248.500px;top:264.9px;font-size:8.800px;letter-spacing:-0.270px;color:#e6e6e6">Hue:</div>
<div class="a" style="left:1453.400px;top:262.800px;width:34.400px;height:12.600px;background:#454545;border:1.500px solid #2462c4;border-radius:1px"></div>
<div class="t" style="left:1456.600px;top:265.1px;font-size:8.800px;letter-spacing:0.200px;color:#f2f2f2">-89</div>
<div class="a" style="left:1256px;top:278.400px;width:223.800px;height:2.400px;background:linear-gradient(90deg,#f33 0%,#ff0 16.600%,#3f3 33.300%,#3ff 50%,#22f 66.600%,#f4f 83.300%,#f33 100%)"></div>
<div class="t" style="left:1248.500px;top:295.4px;font-size:8.800px;letter-spacing:-0.100px;color:#e6e6e6">Saturation:</div>
<div class="a" style="left:1454.400px;top:294px;width:32px;height:10.400px;background:#454545;border:1px solid #4f4f4f;border-radius:1px"></div>
<div class="t" style="left:1456.600px;top:295.2px;font-size:8.800px;letter-spacing:-0.300px;color:#ececec">-13</div>
<div class="a" style="left:1256px;top:308.400px;width:223.800px;height:2.400px;background:linear-gradient(90deg,#8a7e7e 0%,#c85a5a 45%,#f23a30 100%)"></div>
<div class="t" style="left:1248.500px;top:325.1px;font-size:8.800px;letter-spacing:-0.110px;color:#e6e6e6">Lightness:</div>
<div class="a" style="left:1454.400px;top:323.200px;width:32px;height:11px;background:#454545;border:1px solid #4f4f4f;border-radius:1px"></div>
<div class="t" style="left:1456.600px;top:325.4px;font-size:8.800px;letter-spacing:-0.260px;color:#ececec">+8</div>
<div class="a" style="left:1256px;top:338.200px;width:223.800px;height:2.600px;background:linear-gradient(90deg,#000 0%,#222 25%,#888 50%,#ddd 80%,#fff 100%)"></div>
<!-- colorize -->
<div class="a" style="left:1328.800px;top:361.800px;width:7.800px;height:7.800px;background:#484848;border:1px solid #7a7a7a;border-radius:1.600px"></div>
<div class="t" style="left:1340px;top:362.3px;font-size:8.800px;letter-spacing:-0.135px;color:#e6e6e6">Colorize</div>
<div class="t" style="left:1257.700px;top:379.4px;font-size:8.800px;letter-spacing:-0.150px;color:#dcdcdc">315°/ 345°</div>
<div class="t" style="left:1444.900px;top:379.4px;font-size:8.800px;letter-spacing:0.020px;color:#dcdcdc">15°\45°</div>
<!-- hue bars -->
<div class="a" style="left:1251.400px;top:389.400px;width:232.800px;height:4.600px;background:linear-gradient(90deg,#4ff 0%,#18f 12%,#22f 18%,#84f 27%,#f4f 36%,#f28 44%,#f22 50%,#f80 56%,#ff2 64%,#8f0 76%,#4f4 84%,#4fc 93%,#4ff 100%)"></div>
<div class="a" style="left:1251.400px;top:399px;width:232.800px;height:4.400px;background:linear-gradient(90deg,#4ff 0%,#18f 12%,#22f 18%,#84f 26%,#f4f 33%,#e4f 37%,#a3f 43%,#83f 47%,#b3f 52%,#f3e 55.500%,#f22 59%,#f80 61.500%,#ff2 65%,#8f0 76%,#4f4 84%,#4fc 93%,#4ff 100%)"></div>
<div class="a" style="left:1337.600px;top:394.200px;width:58.800px;height:4.800px;background:#8d8d8d"></div>
<div class="a" style="left:1357.600px;top:394.200px;width:21.600px;height:4.800px;background:#a4a4a4"></div>
<!-- footer -->
<div class="a" style="left:1243px;top:430.800px;width:261.400px;height:1.200px;background:#444"></div>
<div class="a" style="left:1243px;top:450.800px;width:261.400px;height:1.400px;background:#3e3e3e"></div>
<div class="a" style="left:1444.400px;top:432px;width:20.600px;height:18.800px;background:#404040"></div>
<!-- panel scrollbar -->
<div class="a" style="left:1493.600px;top:211.200px;width:11px;height:219.600px;background:#4e4e4e"></div>
<div class="a" style="left:1495.600px;top:213.600px;width:7px;height:211.600px;background:#6c6c6c;border-radius:3.500px"></div>
<svg class="a" style="left:0;top:0" width="1600" height="470" viewBox="0 0 1600 470">
 <defs>
  <linearGradient id="ag" x1="0" y1="0" x2="1" y2="0"><stop offset="0" stop-color="#222"/><stop offset="1" stop-color="#f2f2f2"/></linearGradient>
 </defs>
 <!-- panel header controls -->
 <g fill="none" stroke="#d8d8d8" stroke-width="1"><polyline points="1473,170.800 1475.600,173.300 1473,175.800"/><polyline points="1477,170.800 1479.600,173.300 1477,175.800"/></g>
 <rect x="1485.800" y="169" width="1" height="8.400" fill="#8a8a8a"/>
 <g fill="#bdbdbd"><rect x="1492" y="170.300" width="8" height="1"/><rect x="1492" y="172.100" width="8" height="1"/><rect x="1492" y="173.900" width="8" height="1"/><rect x="1492" y="175.700" width="8" height="1"/></g>
 <!-- adjustment icon -->
 <rect x="1254.400" y="192.200" width="12.200" height="10.400" fill="url(#ag)" stroke="#e8e8e8" stroke-width="1"/>
 <rect x="1254.900" y="192.700" width="11.200" height="3.600" fill="#e8e8e8"/>
 <rect x="1256.200" y="193.400" width="2" height="2.200" fill="#2a2a2a"/><rect x="1259.500" y="193.400" width="2" height="2.200" fill="#2a2a2a"/><rect x="1262.800" y="193.400" width="2" height="2.200" fill="#2a2a2a"/>
 <!-- mask ring -->
 <circle cx="1279.600" cy="198.300" r="2.500" fill="#505050" stroke="#363636" stroke-width="1"/>
 <!-- chevrons -->
 <g fill="none" stroke="#dcdcdc" stroke-width="1.100"><polyline points="1479,225.200 1481.500,227.600 1484,225.200"/><polyline points="1479,245.600 1481.500,248 1484,245.600"/></g>
 <!-- targeted adjustment hand -->
 <path d="M1258.600 244.600 q0 -1 0.900 -1 q0.900 0 0.900 1 v3.400 l0.600 -0.300 q0.800 -0.300 1 0.300 q1 -0.500 1.300 0.300 q1.100 -0.400 1.300 0.500 q1.200 -0.100 1.100 1.200 l-0.300 2.400 q-0.300 1.400 -1.600 1.400 h-3 q-1 0 -1.800 -1 l-2.200 -3 q-0.600 -1 0.200 -1.400 q0.800 -0.300 1.600 0.800z" fill="#f0f0f0"/>
 <path d="M1255.200 242.200 l2.400 -1.500 v3z M1264.400 242.200 l-2.400 -1.500 v3z" fill="#f0f0f0"/>
 <!-- slider thumbs -->
 <g fill="#f4f4f4" stroke="#2a2a2a" stroke-width="0.900" stroke-linejoin="round">
  <path d="M1296.800 280.600 l4.400 5.800 v1.600 q0 1.400 -1.400 1.400 h-6 q-1.400 0 -1.400 -1.400 v-1.600z"/>
  <path d="M1352.600 310.600 l4.400 5.800 v1.600 q0 1.400 -1.400 1.400 h-6 q-1.400 0 -1.400 -1.400 v-1.600z"/>
  <path d="M1377 340.600 l4.400 5.800 v1.600 q0 1.400 -1.400 1.400 h-6 q-1.400 0 -1.400 -1.400 v-1.600z"/>
 </g>
 <!-- eyedroppers -->
 <g id="eyd">
  <path d="M1255 372 l-0.500 -1.500 l5.800 -6 l1.700 1.700 l-5.800 5.800z" fill="none" stroke="#e8e8e8" stroke-width="1"/>
  <path d="M1260.200 362.800 l3.800 3.800 l-1.100 1.100 l-3.800 -3.800z" fill="#e8e8e8"/>
  <path d="M1262.500 363 q1.900 -2.900 3.400 -1.400 q1.500 1.500 -1.400 3.400z" fill="#e8e8e8"/>
 </g>
 <use href="#eyd" x="23.600"/><use href="#eyd" x="47.200"/>
 <path d="M1287 368.800 v3.600 M1285.200 370.600 h3.600 M1308.800 370.600 h3.600" stroke="#e8e8e8" stroke-width="1" fill="none"/>
 <!-- range markers -->
 <path d="M1337.800 394 v5.200 h-0.600 a2.600 2.600 0 0 1 0 -5.200z" fill="#f4f4f4" stroke="#222" stroke-width="0.600"/>
 <path d="M1397.800 394 v5.200 h0.600 a2.600 2.600 0 0 0 0 -5.200z" fill="#f4f4f4" stroke="#222" stroke-width="0.600"/>
 <rect x="1356.600" y="394" width="1.800" height="5.200" fill="#f4f4f4" stroke="#222" stroke-width="0.600"/>
 <rect x="1378.600" y="394" width="1.800" height="5.200" fill="#f4f4f4" stroke="#222" stroke-width="0.600"/>
 <!-- footer icons -->
 <g fill="#e6e6e6">
  <rect x="1385.400" y="436.800" width="7.600" height="8.400"/>
  <path d="M1378.800 438.600 l2 2 l2 -2 l0.800 0.800 l-2 2 l2 2 l-0.800 0.800 l-2 -2 l-2 2 l-0.800 -0.800 l2 -2 l-2 -2z" transform="translate(424.500 135) scale(0.692)"/>
 </g>
 <path d="M1382.600 439 v4.600 h2.800" fill="none" stroke="#e6e6e6" stroke-width="1"/>
 <g fill="none" stroke="#e6e6e6" stroke-width="1.100">
  <path d="M1402.400 440.200 q3.200 -3.600 6.400 -3.600 q3.200 0 6.400 3.600 q-3.200 3.600 -6.400 3.600 q-3.200 0 -6.400 -3.600z"/>
  <path d="M1415.600 439.600 q1.800 2.400 0.200 4.800 q-1 1.200 -2.600 1.400"/>
  <path d="M1428.200 441.200 q0.600 -4 4.400 -4 q4 0.200 4 4 q-0.200 3 -3.200 3.800"/>
  <path d="M1427.200 445.600 h10"/>
  <path d="M1449.600 440.800 q2.600 -3.400 5.200 -3.400 q2.600 0 5.200 3.400 q-2.600 3.400 -5.200 3.400 q-2.600 0 -5.200 -3.400z" stroke-width="1.200"/>
 </g>
 <circle cx="1408.600" cy="440" r="1.700" fill="#e6e6e6"/>
 <path d="M1414.400 444.200 l-2.800 2.200 l0.600 -3.400z" fill="#e6e6e6"/>
 <path d="M1426.200 439.200 l2.200 3.600 l2.200 -3.200z" fill="#e6e6e6"/>
 <circle cx="1454.800" cy="440.800" r="2" fill="#f0f0f0"/>
 <path d="M1449.600 440.800 q2.600 -3.400 5.200 -3.400 q2.600 0 5.200 3.400 q-2.600 3.400 -5.200 3.400 q-2.600 0 -5.200 -3.400z" fill="#f0f0f0"/>
 <circle cx="1454.800" cy="440.800" r="1.900" fill="#333"/><circle cx="1455.400" cy="440.200" r="0.700" fill="#ddd"/>
 <!-- trash -->
 <g fill="none" stroke="#d0d0d0" stroke-width="1"><path d="M1474 439.200 h7.200 v6.400 h-7.200z M1476.400 439.200 v6.400 M1478.800 439.200 v6.400 M1474 442.400 h7.200 M1472.800 438.400 h9.600 M1475.600 438.200 q0 -1.800 2 -1.800 q2 0 2 1.800"/></g>
 <!-- red arrow -->
 <path d="M1291.700 111.200 H1296.400 V194 H1305.700 L1295 240 L1283 194 H1291.700Z" fill="#ff0000"/>
</svg>
<!-- ===== status bar ===== -->
<div class="a" style="left:30.600px;top:901.400px;width:47.800px;height:11.600px;background:#454545"></div>
<div class="a" style="left:78.400px;top:901.400px;width:144.400px;height:11.600px;background:#535353"></div>
<div class="t" style="left:46.300px;top:904.6px;font-size:8.800px;letter-spacing:-0.430px;color:#e2e2e2">50%</div>
<div class="t" style="left:112.300px;top:904.6px;font-size:8.800px;letter-spacing:-0.350px;color:#e2e2e2">Doc: 11.3M/11.3M</div>
<svg class="a" style="left:210px;top:900px" width="14" height="13" viewBox="210 900 14 13"><polyline points="215.200,904.600 217.600,908 215.200,911.400" fill="none" stroke="#cfcfcf" stroke-width="1"/></svg>
</div>
</body>
</html>
